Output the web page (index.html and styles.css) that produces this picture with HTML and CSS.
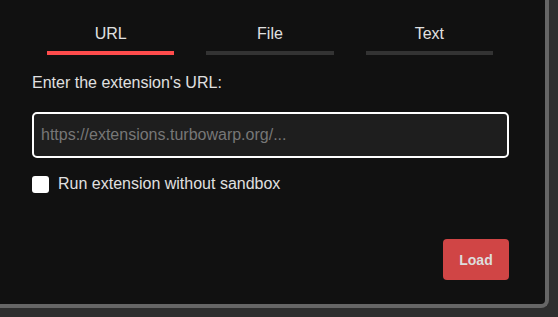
FILE: index.html
```html
<!DOCTYPE html>
<html>
<head>
<meta charset="utf-8">
<link rel="stylesheet" href="styles.css">
</head>
<body>
<div class="modal">
  <div class="tabs">
    <div class="tab active">URL</div>
    <div class="tab">File</div>
    <div class="tab">Text</div>
  </div>
  <div class="label">Enter the extension's URL:</div>
  <input class="url-input" type="text" placeholder="https://extensions.turbowarp.org/..." autofocus>
  <label class="check-row">
    <span class="checkbox"></span>
    <span class="check-text">Run extension without sandbox</span>
  </label>
  <div class="actions">
    <button class="load">Load</button>
  </div>
</div>
</body>
</html>
```
FILE: styles.css
```css
html, body {
  margin: 0;
  padding: 0;
  background: #2e2e2e;
  font-family: "Liberation Sans", Arial, sans-serif;
}
.modal {
  width: 477px;
  height: 304px;
  padding: 0 36px 0 32px;
  background: #111111;
  border-right: 4px solid #666666;
  border-bottom: 4px solid #666666;
  border-bottom-right-radius: 8px;
  display: flex;
  flex-direction: column;
}
.tabs {
  display: flex;
  gap: 32px;
  padding: 0 16px 0 15px;
}
.tab {
  flex: 1;
  text-align: center;
  color: #e0e0e0;
  font-size: 16px;
  line-height: 18px;
  padding-top: 25px;
  padding-bottom: 8px;
  border-bottom: 4px solid #333333;
}
.tab.active {
  border-bottom-color: #ff4c4c;
}
.label {
  margin-top: 19px;
  color: #e0e0e0;
  font-size: 16px;
  line-height: 18px;
}
.url-input {
  margin-top: 20px;
  height: 46px;
  box-sizing: border-box;
  width: 477px;
  border: 2px solid #ffffff;
  border-radius: 5px;
  background: #1e1e1e;
  color: #e0e0e0;
  font-family: "Liberation Sans", Arial, sans-serif;
  font-size: 16px;
  padding: 0 7px;
  outline: none;
}
.url-input::placeholder {
  color: #777777;
}
.check-row {
  margin-top: 17px;
  display: flex;
  align-items: center;
  gap: 9px;
}
.checkbox {
  width: 17px;
  height: 17px;
  background: #ffffff;
  border-radius: 3px;
}
.check-text {
  color: #e0e0e0;
  font-size: 16px;
  line-height: 18px;
}
.actions {
  margin-top: 46px;
  display: flex;
  justify-content: flex-end;
}
.load {
  width: 66px;
  height: 41px;
  border: none;
  border-radius: 4px;
  background: #d04545;
  color: #dddddd;
  font-family: "Liberation Sans", Arial, sans-serif;
  font-weight: bold;
  font-size: 14px;
  padding: 0;
}
```
